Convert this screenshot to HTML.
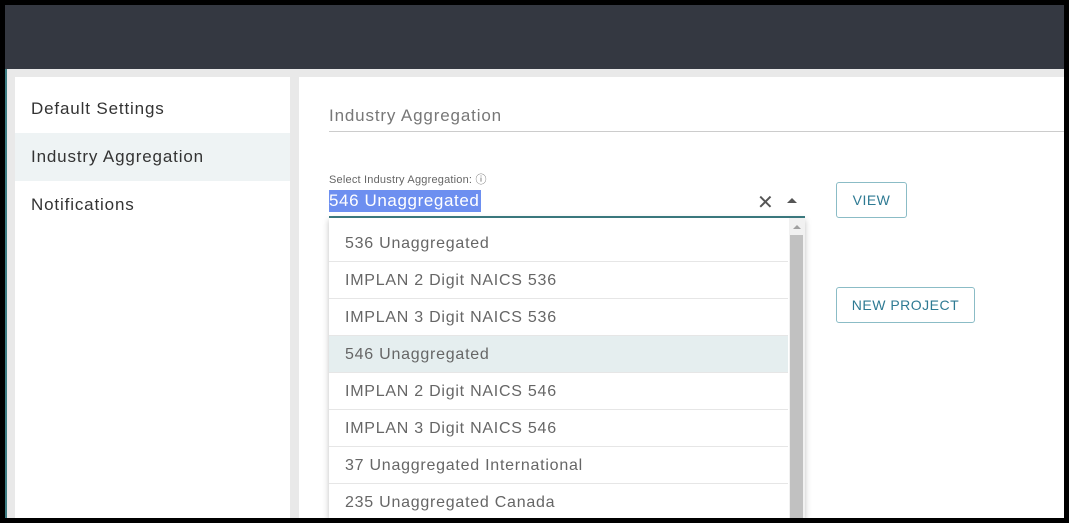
<!DOCTYPE html>
<html><head><style>
*{margin:0;padding:0;box-sizing:border-box}
body{width:1069px;height:523px;background:#000;position:relative;overflow:hidden;font-family:"Liberation Sans",sans-serif}
.top{position:absolute;left:5px;top:5px;width:1059px;height:64px;background:#343841}
.bg{position:absolute;left:5px;top:69px;width:1059px;height:449px;background:#e9e9e9;border-left:2px solid #3d7d83}
.side{position:absolute;left:15px;top:77px;width:275px;height:441px;background:#fff}
.side div{height:48px;line-height:48px;padding-left:16px;font-size:17px;color:#333;letter-spacing:0.85px}
.main{position:absolute;left:299px;top:77px;width:765px;height:441px;background:#fff}
.abs{position:absolute}
.row{position:absolute;left:0;width:459px;height:37px;line-height:37px;padding-left:16px;font-size:16px;color:#666;border-bottom:1px solid #e6e6e6;letter-spacing:0.75px}
.btn{position:absolute;border:1px solid #8bbcc6;border-radius:3px;color:#2e7a93;font-size:14px;text-align:center;background:#fff;letter-spacing:0.5px}
</style></head><body>
<div class="top"></div>
<div class="bg"></div>
<div class="side">
<div style="margin-top:8px">Default Settings</div>
<div style="background:#eef3f4">Industry Aggregation</div>
<div>Notifications</div>
</div>
<div class="main">
<div class="abs" style="left:30px;top:29px;font-size:17px;color:#777;letter-spacing:0.85px">Industry Aggregation</div>
<div class="abs" style="left:30px;top:54px;width:735px;height:1px;background:#ccc"></div>
<div class="abs" style="left:30px;top:94px;font-size:11px;color:#666;letter-spacing:0.2px">Select Industry Aggregation: ⓘ</div>
<div class="abs" style="left:30px;top:113px;height:22px;line-height:22px;font-size:17px;color:#fff;background:#6d8ff0;padding:0 2px 0 0;letter-spacing:0.6px">546 Unaggregated</div>
<div class="abs" style="left:458px;top:113px;font-size:20px;color:#555">✕</div>
<div class="abs" style="left:488px;top:121px;width:0;height:0;border-left:5px solid transparent;border-right:5px solid transparent;border-bottom:5px solid #555"></div>
<div class="abs" style="left:30px;top:139px;width:476px;height:2px;background:#3d7d83"></div>
<div class="btn" style="left:537px;top:105px;width:71px;height:36px;line-height:34px">VIEW</div>
<div class="btn" style="left:537px;top:210px;width:139px;height:36px;line-height:34px">NEW PROJECT</div>
</div>
<div class="abs" style="left:329px;top:218px;width:476px;height:300px;background:#fff;box-shadow:0 2px 6px rgba(0,0,0,.25);overflow:hidden">
<div class="row" style="top:7px">536 Unaggregated</div>
<div class="row" style="top:44px">IMPLAN 2 Digit NAICS 536</div>
<div class="row" style="top:81px">IMPLAN 3 Digit NAICS 536</div>
<div class="row" style="top:118px;background:#e5eeef">546 Unaggregated</div>
<div class="row" style="top:155px">IMPLAN 2 Digit NAICS 546</div>
<div class="row" style="top:192px">IMPLAN 3 Digit NAICS 546</div>
<div class="row" style="top:229px">37 Unaggregated International</div>
<div class="row" style="top:266px">235 Unaggregated Canada</div>
<div class="abs" style="left:460px;top:0;width:16px;height:300px;background:#f1f1f1"></div>
<div class="abs" style="left:464px;top:7px;width:0;height:0;border-left:4px solid transparent;border-right:4px solid transparent;border-bottom:4px solid #a0a0a0"></div>
<div class="abs" style="left:461px;top:17px;width:13px;height:290px;background:#c1c1c1"></div>
</div>
</body></html>
